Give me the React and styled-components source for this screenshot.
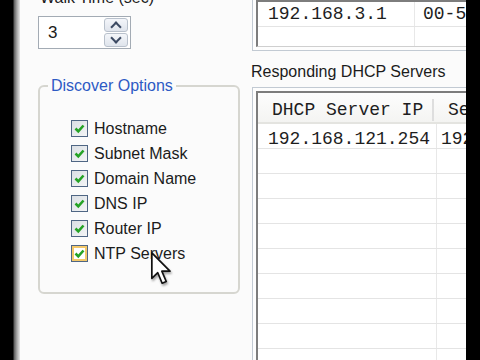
import styled, { createGlobalStyle } from "styled-components";

const GlobalStyle = createGlobalStyle`
  html, body { margin: 0; padding: 0; background: #000; }
  body { font-family: "Liberation Sans", Arial, sans-serif; }
`;

const options = [
  { label: "Hostname" },
  { label: "Subnet Mask" },
  { label: "Domain Name" },
  { label: "DNS IP" },
  { label: "Router IP" },
  { label: "NTP Servers", hot: true },
];

const emptyRows = [1, 2, 3, 4, 5, 6, 7, 8, 9];

export default function App() {
  return (
    <>
      <GlobalStyle />
      <Screen>
        <LeftEdge />
        <Window>
          <LeftColumn>
            <FieldLabel>Walk Time (sec)</FieldLabel>
            <SpinBox>
              <SpinValue>3</SpinValue>
              <SpinButtons>
                <SpinButton>
                  <Chevron up />
                </SpinButton>
                <SpinButton>
                  <Chevron />
                </SpinButton>
              </SpinButtons>
            </SpinBox>

            <GroupBox>
              <Legend>Discover Options</Legend>
              {options.map((o) => (
                <CheckRow key={o.label}>
                  <CheckBox $hot={o.hot}>
                    <svg width="13" height="13" viewBox="0 0 13 13">
                      <path d="M2.5 6.5 L5.3 9.3 L10.5 3.5" fill="none" stroke="#25a325" strokeWidth="2.6" />
                    </svg>
                  </CheckBox>
                  <CheckText>{o.label}</CheckText>
                </CheckRow>
              ))}
            </GroupBox>
          </LeftColumn>

          <RightColumn>
            <ListFrame $top>
              <ListInner>
                <Row $h={25} $line>
                  <Cell $w={157} $pad={10}>192.168.3.1</Cell>
                  <Cell $pad={8}>00-50-56-C0-00-08</Cell>
                </Row>
                <Row $h={19}>
                  <Cell $w={157} />
                  <Cell />
                </Row>
              </ListInner>
            </ListFrame>

            <SectionLabel>Responding DHCP Servers</SectionLabel>

            <ListFrame>
              <ListInner>
                <HeaderRow>
                  <HeaderCell $w={176}>DHCP Server IP</HeaderCell>
                  <HeaderCell>Server ID</HeaderCell>
                </HeaderRow>
                <Row $h={25} $line>
                  <Cell $w={179} $pad={10} $down>192.168.121.254</Cell>
                  <Cell $pad={4} $down>192.168.121.254</Cell>
                </Row>
                {emptyRows.map((r) => (
                  <Row key={r} $h={25} $line>
                    <Cell $w={179} />
                    <Cell />
                  </Row>
                ))}
              </ListInner>
            </ListFrame>
          </RightColumn>
        </Window>
        <RightEdge />

        <Pointer width="22" height="34" viewBox="0 0 13 20">
          <path
            d="M0.5 0.5 L0.5 15.5 L4 12.2 L6.6 18.4 L9 17.4 L6.4 11.3 L11.2 11.3 Z"
            fill="#fff"
            stroke="#111"
            strokeWidth="1"
            strokeLinejoin="round"
          />
        </Pointer>
      </Screen>
    </>
  );
}

const Screen = styled.div`
  position: relative;
  display: flex;
  width: 480px;
  height: 360px;
  overflow: hidden;
  background: #000;
`;

const LeftEdge = styled.div`
  width: 20px;
  flex-shrink: 0;
  background: linear-gradient(90deg, #000 0, #000 13px, #5a5a5a 14px, #a8a8a8 17px, #e6e6e6 20px);
`;

const RightEdge = styled.div`
  width: 14px;
  flex-shrink: 0;
  background: #000;
`;

const Window = styled.div`
  flex: 1;
  display: flex;
  background: #fbfbfb;
  overflow: hidden;
`;

const LeftColumn = styled.div`
  width: 228px;
  flex-shrink: 0;
  padding-left: 18px;
  box-sizing: border-box;
  display: flex;
  flex-direction: column;
  align-items: flex-start;
`;

const FieldLabel = styled.div`
  margin-top: -11px;
  padding-left: 2px;
  font-size: 16px;
  line-height: 18px;
  color: #1c1c1c;
`;

const SpinBox = styled.div`
  margin-top: 9px;
  width: 93px;
  height: 33px;
  box-sizing: border-box;
  border: 1px solid #a3abb4;
  background: #fff;
  display: flex;
  align-items: center;
  justify-content: space-between;
  padding: 0 2px 0 9px;
`;

const SpinValue = styled.span`
  font-size: 17px;
  color: #1a1a1a;
`;

const SpinButtons = styled.div`
  display: flex;
  flex-direction: column;
  gap: 1px;
`;

const SpinButton = styled.div`
  width: 24px;
  height: 14px;
  box-sizing: border-box;
  border: 1px solid #b9c1cc;
  border-radius: 3px;
  background: linear-gradient(180deg, #f4f6fa 0%, #dfe4ec 100%);
  display: flex;
  align-items: center;
  justify-content: center;
`;

const Chevron = styled.span`
  width: 6px;
  height: 6px;
  border-left: 2px solid #3c4a63;
  border-top: 2px solid #3c4a63;
  transform: ${(p) => (p.up ? "translateY(2px) rotate(45deg)" : "translateY(-2px) rotate(225deg)")};
`;

const GroupBox = styled.fieldset`
  margin: 28px 0 0 0;
  width: 202px;
  box-sizing: border-box;
  border: 2px solid #d6d6d0;
  border-radius: 6px;
  padding: 21px 0 26px 31px;
`;

const Legend = styled.legend`
  margin-left: -23px;
  padding: 0 3px;
  font-size: 16px;
  line-height: 18px;
  color: #2d5ac4;
`;

const CheckRow = styled.div`
  display: flex;
  align-items: center;
  gap: 6px;
  height: 25px;
`;

const CheckBox = styled.div`
  width: 17px;
  height: 17px;
  box-sizing: border-box;
  border: 1px solid #4f6684;
  background: ${(p) => (p.$hot ? "#fff" : "linear-gradient(135deg, #dadfe4 0%, #f4f5f6 100%)")};
  box-shadow: ${(p) => (p.$hot ? "inset 0 0 0 2px #f3c86a" : "none")};
  display: flex;
  align-items: center;
  justify-content: center;
`;

const CheckText = styled.span`
  font-size: 16px;
  color: #1c1c1c;
`;

const RightColumn = styled.div`
  flex: 1;
  min-width: 0;
  padding-left: 4px;
  display: flex;
  flex-direction: column;
  align-items: flex-start;
  overflow: hidden;
`;

const ListFrame = styled.div`
  margin-top: ${(p) => (p.$top ? "-4px" : "6px")};
  width: 250px;
  flex-shrink: 0;
  border: 1px solid #c2cad3;
  padding: 3px;
  background: #fdfdfd;
`;

const ListInner = styled.div`
  border-left: 2px solid #7d7d7d;
  border-top: 2px solid #7d7d7d;
  border-bottom: 1px solid #cfcfcf;
  background: #fff;
`;

const HeaderRow = styled.div`
  display: flex;
  height: 31px;
  box-sizing: border-box;
  align-items: center;
  padding-top: 5px;
  border-bottom: 2px solid #e4e4e0;
  background: linear-gradient(180deg, #fdfdfd 0%, #f4f4f2 100%);
`;

const HeaderCell = styled.div`
  width: ${(p) => (p.$w ? `${p.$w}px` : "auto")};
  flex-shrink: 0;
  box-sizing: border-box;
  padding-left: 14px;
  height: 22px;
  line-height: 22px;
  border-right: ${(p) => (p.$w ? "2px solid #dedede" : "none")};
  font-family: "Liberation Mono", "Courier New", monospace;
  font-size: 18px;
  color: #1e1e1e;
  white-space: nowrap;
`;

const Row = styled.div`
  display: flex;
  height: ${(p) => p.$h}px;
  box-sizing: border-box;
  border-bottom: ${(p) => (p.$line ? "1px solid #e4e4e4" : "none")};
`;

const Cell = styled.div`
  width: ${(p) => (p.$w ? `${p.$w}px` : "auto")};
  flex-shrink: 0;
  box-sizing: border-box;
  padding-left: ${(p) => p.$pad || 0}px;
  padding-top: ${(p) => (p.$down ? "5px" : "0")};
  border-right: ${(p) => (p.$w ? "1px solid #e8e8e8" : "none")};
  display: flex;
  align-items: center;
  font-family: "Liberation Mono", "Courier New", monospace;
  font-size: 18px;
  color: #1e1e1e;
  white-space: nowrap;
`;

const SectionLabel = styled.div`
  margin-top: 12px;
  margin-left: -1px;
  font-size: 16px;
  line-height: 18px;
  color: #1c1c1c;
`;

const Pointer = styled.svg`
  position: absolute;
  left: 151px;
  top: 252px;
  filter: drop-shadow(1px 2px 1px rgba(0, 0, 0, 0.35));
`;
